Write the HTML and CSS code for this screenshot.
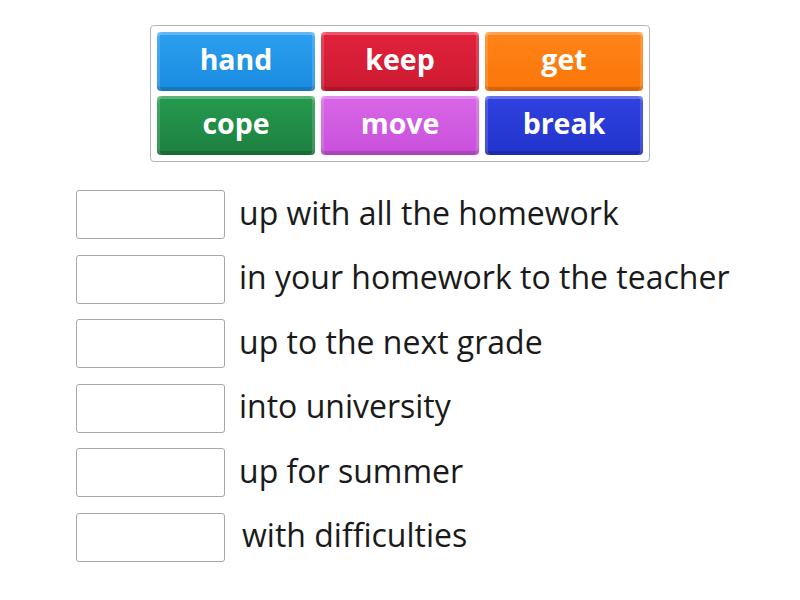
FILE: index.html
```html
<!DOCTYPE html>
<html lang="en">
<head>
    <meta charset="UTF-8">
    <title>Match up</title>
    <link rel="stylesheet" href="styles.css">
</head>
<body>

<div class="bank">
    <div class="tile blue">hand</div>
    <div class="tile red">keep</div>
    <div class="tile orange">get</div>
    <div class="tile green">cope</div>
    <div class="tile purple">move</div>
    <div class="tile navy">break</div>
</div>

<div class="rows">
    <div class="row"><div class="slot"></div><span class="text">up with all the homework</span></div>
    <div class="row"><div class="slot"></div><span class="text">in your homework to the teacher</span></div>
    <div class="row"><div class="slot"></div><span class="text">up to the next grade</span></div>
    <div class="row"><div class="slot"></div><span class="text">into university</span></div>
    <div class="row"><div class="slot"></div><span class="text">up for summer</span></div>
    <div class="row"><div class="slot"></div><span class="text shifted">with difficulties</span></div>
</div>

</body>
</html>
```

FILE: styles.css
```css
body {
    margin: 0;
    background: #fff;
    font-family: 'Open Sans', sans-serif;
}

.bank {
    box-sizing: border-box;
    width: 500px;
    margin: 25px auto 0;
    padding: 6px;
    border: 1px solid #b4b4b4;
    border-radius: 4px;
    display: grid;
    grid-template-columns: repeat(3, 1fr);
    grid-auto-rows: 59px;
    column-gap: 6px;
    row-gap: 5px;
}

.tile {
    display: flex;
    justify-content: center;
    align-items: center;
    border-radius: 4px;
    color: #fff;
    font-size: 28.5px;
    font-weight: bold;
    padding-bottom: 6px;
    box-shadow: inset 0 3px 0 rgba(255, 255, 255, 0.25),
                inset 3px 0 0 rgba(255, 255, 255, 0.15),
                inset -3px 0 0 rgba(255, 255, 255, 0.15),
                inset 0 -4px 0 rgba(0, 0, 0, 0.15);
}

.blue   { background: linear-gradient(#2c9ff0, #1a8ce0); }
.red    { background: linear-gradient(#e2223c, #cc1a30); }
.orange { background: linear-gradient(#ff8419, #fb7608); }
.green  { background: linear-gradient(#259a4f, #1d8040); }
.purple { background: linear-gradient(#d868e6, #c94fdc); }
.navy   { background: linear-gradient(#2f42e0, #2233cc); }

.rows {
    margin: 28px 0 0 76px;
    display: flex;
    flex-direction: column;
    gap: 15.5px;
}

.row {
    display: flex;
    align-items: center;
    gap: 14px;
}

.slot {
    box-sizing: border-box;
    width: 149px;
    height: 49px;
    border: 1px solid #a8a8a8;
    border-radius: 3px;
    flex-shrink: 0;
}

.text {
    font-size: 32px;
    line-height: 44px;
    color: #1a1a1a;
    padding-bottom: 4px;
    white-space: nowrap;
}

.shifted {
    margin-left: 3px;
}
```
